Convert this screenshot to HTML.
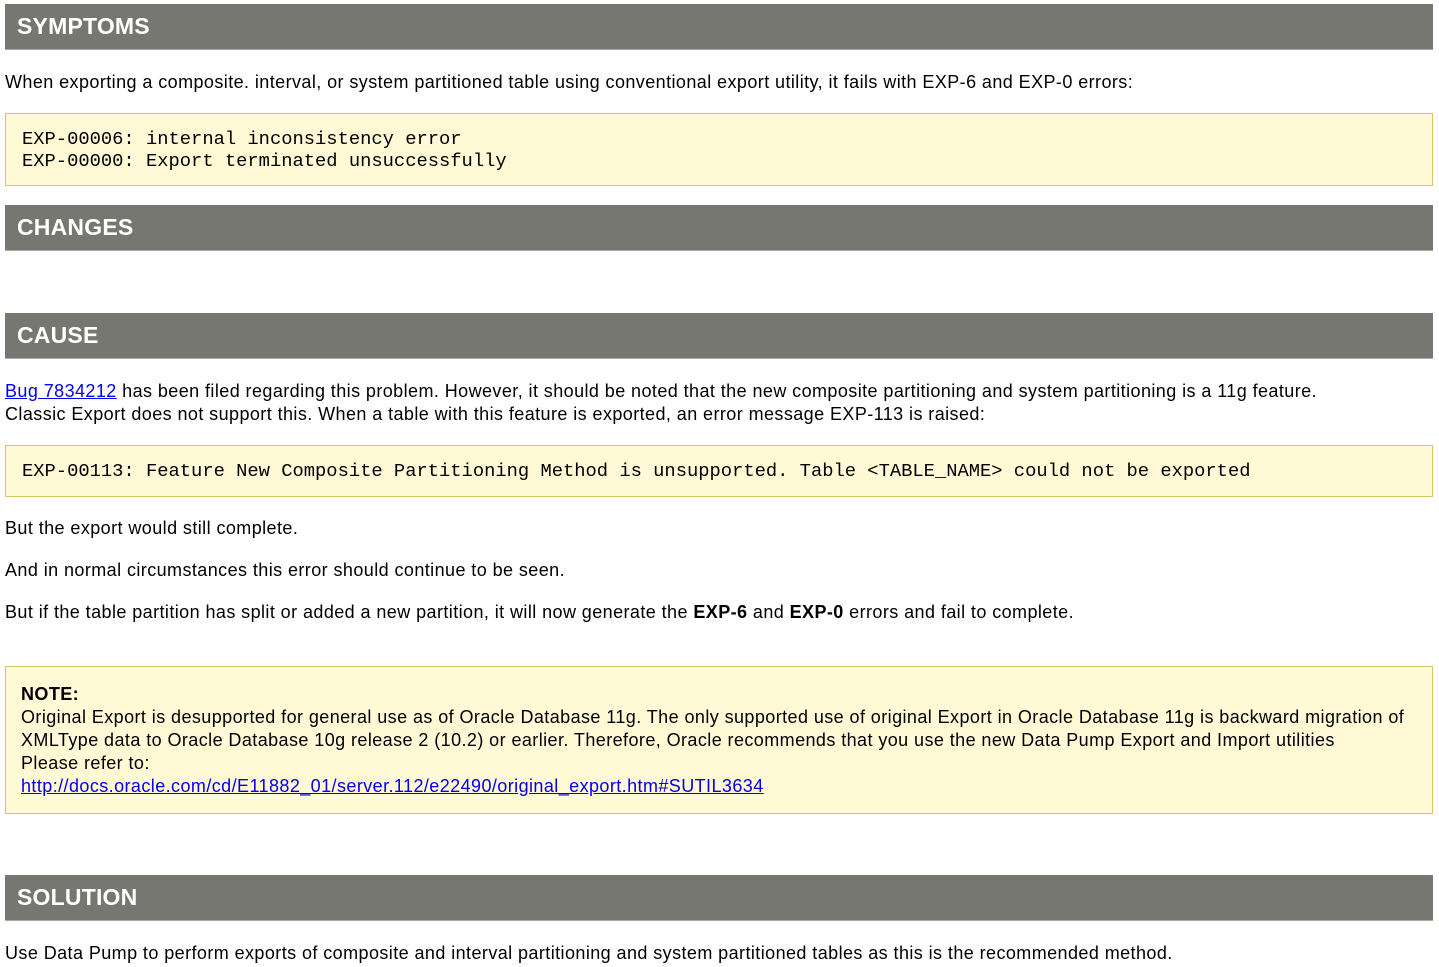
<!DOCTYPE html>
<html><head><meta charset="utf-8"><style>
body{margin:0;width:1439px;height:967px;background:#fff;position:relative;overflow:hidden;font-family:"Liberation Sans","DejaVu Sans",sans-serif;font-size:18px;color:#000}
.h{position:absolute;left:5px;width:1428px;height:45px;background:#777772;color:#fff;font-weight:bold;font-size:23px;line-height:45px;text-indent:12px;border-bottom:1px solid #aaa;letter-spacing:0.2px}
.t{position:absolute;left:5px;white-space:nowrap;line-height:23px;letter-spacing:0.42px}
.box{position:absolute;left:5px;width:1426px;background:#fff9d6;border:1px solid #d9c46a}
.m{font-family:"Liberation Mono",monospace;font-size:18.8px;line-height:22px;white-space:pre;padding-left:16px}
a{color:#00e;text-decoration:underline}
</style></head><body>
<div class="h" style="top:4px">SYMPTOMS</div>
<div class="t" style="top:71px">When exporting a composite. interval, or system partitioned table using conventional export utility, it fails with EXP-6 and EXP-0 errors:</div>
<div class="box m" style="top:113px;height:57px;padding-top:14px;width:1410px">EXP-00006: internal inconsistency error
EXP-00000: Export terminated unsuccessfully</div>
<div class="h" style="top:205px">CHANGES</div>
<div class="h" style="top:313px">CAUSE</div>
<div class="t" style="top:380px"><a>Bug 7834212</a> has been filed regarding this problem. However, it should be noted that the new composite partitioning and system partitioning is a 11g feature.<br>Classic Export does not support this. When a table with this feature is exported, an error message EXP-113 is raised:</div>
<div class="box m" style="top:445px;height:50px;line-height:50px;width:1410px">EXP-00113: Feature New Composite Partitioning Method is unsupported. Table &lt;TABLE_NAME&gt; could not be exported</div>
<div class="t" style="top:517px">But the export would still complete.</div>
<div class="t" style="top:559px">And in normal circumstances this error should continue to be seen.</div>
<div class="t" style="top:601px">But if the table partition has split or added a new partition, it will now generate the <b>EXP-6</b> and <b>EXP-0</b> errors and fail to complete.</div>
<div class="box" style="top:666px;height:146px">
<div class="t" style="left:15px;top:16px"><b>NOTE:</b><br>Original Export is desupported for general use as of Oracle Database 11g. The only supported use of original Export in Oracle Database 11g is backward migration of<br>XMLType data to Oracle Database 10g release 2 (10.2) or earlier. Therefore, Oracle recommends that you use the new Data Pump Export and Import utilities<br>Please refer to:<br><a>http://docs.oracle.com/cd/E11882_01/server.112/e22490/original_export.htm#SUTIL3634</a></div>
</div>
<div class="h" style="top:875px">SOLUTION</div>
<div class="t" style="top:942px">Use Data Pump to perform exports of composite and interval partitioning and system partitioned tables as this is the recommended method.</div>
</body></html>
